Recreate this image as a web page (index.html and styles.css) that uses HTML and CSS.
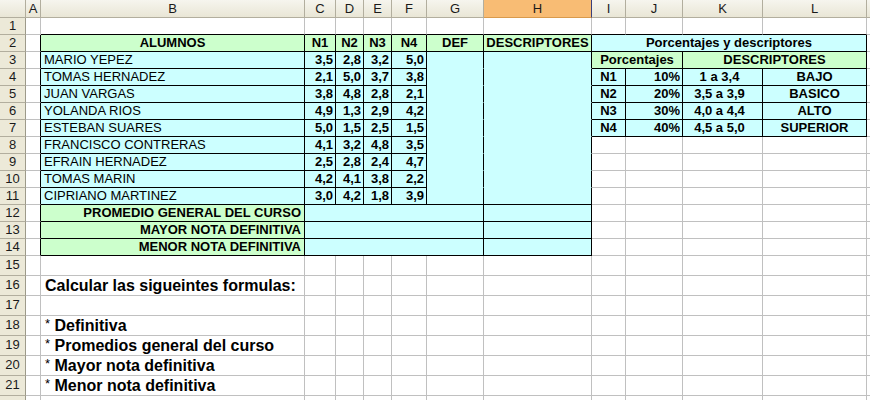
FILE: index.html
```html
<!DOCTYPE html>
<html>
<head>
<meta charset="utf-8">
<link rel="stylesheet" href="styles.css">
</head>
<body>
<div class="sheet">
  <div class="corner"></div>
  <div class="ch">A</div><div class="ch">B</div><div class="ch">C</div><div class="ch">D</div><div class="ch">E</div><div class="ch">F</div><div class="ch">G</div><div class="ch sel">H</div><div class="ch">I</div><div class="ch">J</div><div class="ch">K</div><div class="ch">L</div><div class="ch"></div>

  <div class="rh">1</div>
  <div class="c"></div><div class="c bb"></div><div class="c bb"></div><div class="c bb"></div><div class="c bb"></div><div class="c bb"></div><div class="c bb"></div><div class="c bb"></div><div class="c bb"></div><div class="c bb"></div><div class="c bb"></div><div class="c bb"></div><div class="c"></div>

  <div class="rh">2</div>
  <div class="c rb"></div>
  <div class="c gr hd ctr rb bb">ALUMNOS</div>
  <div class="c gr hd ctr rb bb">N1</div><div class="c gr hd ctr rb bb">N2</div><div class="c gr hd ctr rb bb">N3</div><div class="c gr hd ctr rb bb">N4</div>
  <div class="c gr hd ctr rb bb">DEF</div><div class="c gr hd ctr rb bb">DESCRIPTORES</div>
  <div class="c cy hd ctr rb bb span4">Porcentajes y descriptores</div>
  <div class="c"></div>

  <div class="rh">3</div>
  <div class="c rb"></div>
  <div class="c cy name rb bb">MARIO YEPEZ</div>
  <div class="c cy num rb bb">3,5</div><div class="c cy num rb bb">2,8</div><div class="c cy num rb bb">3,2</div><div class="c cy num rb bb">5,0</div>
  <div class="c cy rb nb"></div><div class="c cy rb nb"></div>
  <div class="c gr hd ctr rb bb span2">Porcentajes</div>
  <div class="c gr hd ctr rb bb span2">DESCRIPTORES</div>
  <div class="c"></div>

  <div class="rh">4</div>
  <div class="c rb"></div>
  <div class="c cy name rb bb">TOMAS HERNADEZ</div>
  <div class="c cy num rb bb">2,1</div><div class="c cy num rb bb">5,0</div><div class="c cy num rb bb">3,7</div><div class="c cy num rb bb">3,8</div>
  <div class="c cy rb nb"></div><div class="c cy rb nb"></div>
  <div class="c cy hd ctr rb bb">N1</div><div class="c cy num rb bb">10%</div><div class="c cy hd rng rb bb">1 a 3,4</div><div class="c cy hd ctr rb bb">BAJO</div>
  <div class="c"></div>

  <div class="rh">5</div>
  <div class="c rb"></div>
  <div class="c cy name rb bb">JUAN VARGAS</div>
  <div class="c cy num rb bb">3,8</div><div class="c cy num rb bb">4,8</div><div class="c cy num rb bb">2,8</div><div class="c cy num rb bb">2,1</div>
  <div class="c cy rb nb"></div><div class="c cy rb nb"></div>
  <div class="c cy hd ctr rb bb">N2</div><div class="c cy num rb bb">20%</div><div class="c cy hd rng rb bb">3,5 a 3,9</div><div class="c cy hd ctr rb bb">BASICO</div>
  <div class="c"></div>

  <div class="rh">6</div>
  <div class="c rb"></div>
  <div class="c cy name rb bb">YOLANDA RIOS</div>
  <div class="c cy num rb bb">4,9</div><div class="c cy num rb bb">1,3</div><div class="c cy num rb bb">2,9</div><div class="c cy num rb bb">4,2</div>
  <div class="c cy rb nb"></div><div class="c cy rb nb"></div>
  <div class="c cy hd ctr rb bb">N3</div><div class="c cy num rb bb">30%</div><div class="c cy hd rng rb bb">4,0 a 4,4</div><div class="c cy hd ctr rb bb">ALTO</div>
  <div class="c"></div>

  <div class="rh">7</div>
  <div class="c rb"></div>
  <div class="c cy name rb bb">ESTEBAN SUARES</div>
  <div class="c cy num rb bb">5,0</div><div class="c cy num rb bb">1,5</div><div class="c cy num rb bb">2,5</div><div class="c cy num rb bb">1,5</div>
  <div class="c cy rb nb"></div><div class="c cy rb nb"></div>
  <div class="c cy hd ctr rb bb">N4</div><div class="c cy num rb bb">40%</div><div class="c cy hd rng rb bb">4,5 a 5,0</div><div class="c cy hd ctr rb bb">SUPERIOR</div>
  <div class="c"></div>

  <div class="rh">8</div>
  <div class="c rb"></div>
  <div class="c cy name rb bb">FRANCISCO CONTRERAS</div>
  <div class="c cy num rb bb">4,1</div><div class="c cy num rb bb">3,2</div><div class="c cy num rb bb">4,8</div><div class="c cy num rb bb">3,5</div>
  <div class="c cy rb nb"></div><div class="c cy rb nb"></div>
  <div class="c"></div><div class="c"></div><div class="c"></div><div class="c"></div><div class="c"></div>

  <div class="rh">9</div>
  <div class="c rb"></div>
  <div class="c cy name rb bb">EFRAIN HERNADEZ</div>
  <div class="c cy num rb bb">2,5</div><div class="c cy num rb bb">2,8</div><div class="c cy num rb bb">2,4</div><div class="c cy num rb bb">4,7</div>
  <div class="c cy rb nb"></div><div class="c cy rb nb"></div>
  <div class="c"></div><div class="c"></div><div class="c"></div><div class="c"></div><div class="c"></div>

  <div class="rh">10</div>
  <div class="c rb"></div>
  <div class="c cy name rb bb">TOMAS MARIN</div>
  <div class="c cy num rb bb">4,2</div><div class="c cy num rb bb">4,1</div><div class="c cy num rb bb">3,8</div><div class="c cy num rb bb">2,2</div>
  <div class="c cy rb nb"></div><div class="c cy rb nb"></div>
  <div class="c"></div><div class="c"></div><div class="c"></div><div class="c"></div><div class="c"></div>

  <div class="rh">11</div>
  <div class="c rb"></div>
  <div class="c cy name rb bb">CIPRIANO MARTINEZ</div>
  <div class="c cy num rb bb">3,0</div><div class="c cy num rb bb">4,2</div><div class="c cy num rb bb">1,8</div><div class="c cy num rb bb">3,9</div>
  <div class="c cy rb bb"></div><div class="c cy rb bb"></div>
  <div class="c"></div><div class="c"></div><div class="c"></div><div class="c"></div><div class="c"></div>

  <div class="rh">12</div>
  <div class="c rb"></div>
  <div class="c gr hd rgt rb bb">PROMEDIO GENERAL DEL CURSO</div>
  <div class="c cy rb bb span5"></div><div class="c cy rb bb"></div>
  <div class="c"></div><div class="c"></div><div class="c"></div><div class="c"></div><div class="c"></div>

  <div class="rh">13</div>
  <div class="c rb"></div>
  <div class="c gr hd rgt rb bb">MAYOR NOTA DEFINITIVA</div>
  <div class="c cy rb bb span5"></div><div class="c cy rb bb"></div>
  <div class="c"></div><div class="c"></div><div class="c"></div><div class="c"></div><div class="c"></div>

  <div class="rh">14</div>
  <div class="c rb"></div>
  <div class="c gr hd rgt rb bb">MENOR NOTA DEFINITIVA</div>
  <div class="c cy rb bb span5"></div><div class="c cy rb bb"></div>
  <div class="c"></div><div class="c"></div><div class="c"></div><div class="c"></div><div class="c"></div>

  <div class="rh tall">15</div>
  <div class="c"></div><div class="c"></div><div class="c"></div><div class="c"></div><div class="c"></div><div class="c"></div><div class="c"></div><div class="c"></div><div class="c"></div><div class="c"></div><div class="c"></div><div class="c"></div><div class="c"></div>

  <div class="rh tall">16</div>
  <div class="c"></div><div class="c big">Calcular las sigueintes formulas:</div><div class="c"></div><div class="c"></div><div class="c"></div><div class="c"></div><div class="c"></div><div class="c"></div><div class="c"></div><div class="c"></div><div class="c"></div><div class="c"></div><div class="c"></div>

  <div class="rh tall">17</div>
  <div class="c"></div><div class="c"></div><div class="c"></div><div class="c"></div><div class="c"></div><div class="c"></div><div class="c"></div><div class="c"></div><div class="c"></div><div class="c"></div><div class="c"></div><div class="c"></div><div class="c"></div>

  <div class="rh tall">18</div>
  <div class="c"></div><div class="c big"><span class="ast">*</span> Definitiva</div><div class="c"></div><div class="c"></div><div class="c"></div><div class="c"></div><div class="c"></div><div class="c"></div><div class="c"></div><div class="c"></div><div class="c"></div><div class="c"></div><div class="c"></div>

  <div class="rh tall">19</div>
  <div class="c"></div><div class="c big"><span class="ast">*</span> Promedios general del curso</div><div class="c"></div><div class="c"></div><div class="c"></div><div class="c"></div><div class="c"></div><div class="c"></div><div class="c"></div><div class="c"></div><div class="c"></div><div class="c"></div><div class="c"></div>

  <div class="rh tall">20</div>
  <div class="c"></div><div class="c big"><span class="ast">*</span> Mayor nota definitiva</div><div class="c"></div><div class="c"></div><div class="c"></div><div class="c"></div><div class="c"></div><div class="c"></div><div class="c"></div><div class="c"></div><div class="c"></div><div class="c"></div><div class="c"></div>

  <div class="rh tall">21</div>
  <div class="c"></div><div class="c big"><span class="ast">*</span> Menor nota definitiva</div><div class="c"></div><div class="c"></div><div class="c"></div><div class="c"></div><div class="c"></div><div class="c"></div><div class="c"></div><div class="c"></div><div class="c"></div><div class="c"></div><div class="c"></div>

  <div class="rh tall"></div>
  <div class="c"></div><div class="c"></div><div class="c"></div><div class="c"></div><div class="c"></div><div class="c"></div><div class="c"></div><div class="c"></div><div class="c"></div><div class="c"></div><div class="c"></div><div class="c"></div><div class="c"></div>
</div>
</body>
</html>
```

FILE: styles.css
```css
html, body {
  margin: 0;
  padding: 0;
  background: #ffffff;
  overflow: hidden;
}

.sheet {
  display: grid;
  grid-template-columns: 26px 15px 264px 31px 28px 28px 35px 57px 108px 34px 57px 80px 104px 20px;
  grid-template-rows: 18px repeat(14, 17px) repeat(7, 20px) 20px;
  width: 887px;
  font-family: "Liberation Sans", Arial, sans-serif;
  font-size: 13px;
  color: #000;
}

.corner,
.ch,
.rh {
  box-sizing: border-box;
  background: linear-gradient(#f6f5ee, #e9e6d6);
  border-right: 1px solid #b2ae9e;
  border-bottom: 1px solid #b2ae9e;
  text-align: center;
  color: #1a1a1a;
  line-height: 17px;
  white-space: nowrap;
  overflow: hidden;
}

.rh {
  background: #ece9d8;
  line-height: 16px;
  border-right-color: #9d9a8a;
}

.rh.tall {
  line-height: 18px;
}

.ch.sel {
  background: #f8bc74;
  border-right-color: #3a3f7a;
  border-bottom-color: #d99a4c;
}

.c {
  box-sizing: border-box;
  border-right: 1px solid #c0c0c0;
  border-bottom: 1px solid #c0c0c0;
  background: #fff;
  line-height: 16px;
  padding: 0 3px;
  white-space: nowrap;
  overflow: hidden;
}

.gr { background: #ccffcc; }
.cy { background: #ccffff; }

.rb { border-right-color: #000; }
.bb { border-bottom-color: #000; }
.nb { border-bottom-color: transparent; }

.hd { font-weight: 700; }
.ctr { text-align: center; padding: 0; }
.rgt { text-align: right; }
.name { padding-left: 3px; }

.num {
  font-weight: 700;
  text-align: right;
  padding-right: 2px;
}

.rng {
  text-align: center;
  padding: 0 6px 0 0;
}

.span2 { grid-column: span 2; }
.span4 { grid-column: span 4; }
.span5 { grid-column: span 5; }

.big {
  font-size: 16px;
  font-weight: 700;
  line-height: 19px;
  padding-left: 4px;
  overflow: visible;
}

.ast {
  font-size: 13px;
  font-weight: 400;
  vertical-align: top;
  line-height: 16px;
}
```
